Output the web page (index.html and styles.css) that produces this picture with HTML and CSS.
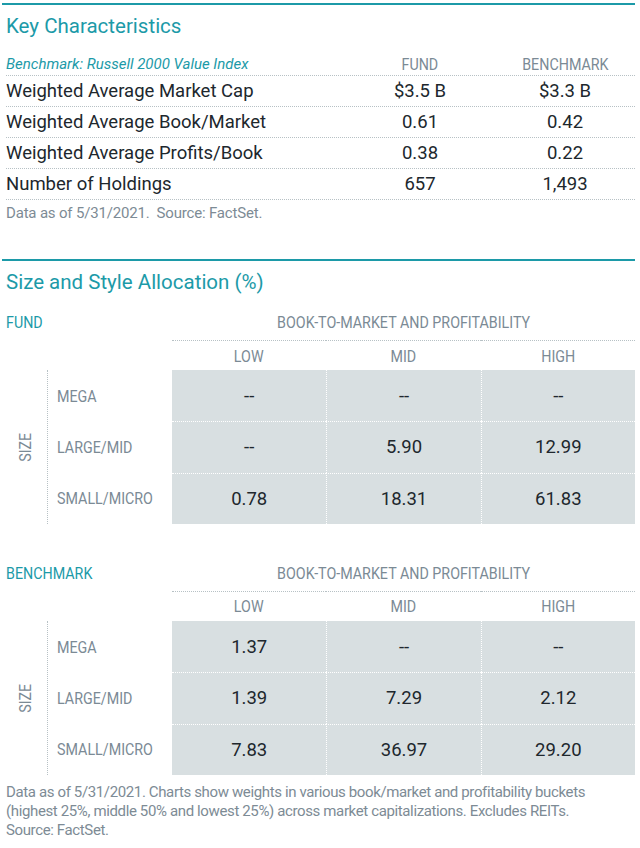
FILE: index.html
```html
<!DOCTYPE html>
<html>
<head>
<meta charset="utf-8">
<link rel="stylesheet" href="styles.css">
</head>
<body>
<section class="section">
  <h2 class="title">Key Characteristics</h2>
  <div class="kc">
    <div class="kc-row kc-head">
      <div class="bench-name">Benchmark: Russell 2000 Value Index</div>
      <div class="col-h"><span class="c">FUND</span></div>
      <div class="col-h"><span class="c">BENCHMARK</span></div>
    </div>
    <div class="kc-row"><div>Weighted Average Market Cap</div><div class="num">$3.5 B</div><div class="num">$3.3 B</div></div>
    <div class="kc-row"><div>Weighted Average Book/Market</div><div class="num">0.61</div><div class="num">0.42</div></div>
    <div class="kc-row"><div>Weighted Average Profits/Book</div><div class="num">0.38</div><div class="num">0.22</div></div>
    <div class="kc-row"><div>Number of Holdings</div><div class="num">657</div><div class="num">1,493</div></div>
  </div>
  <p class="note">Data as of 5/31/2021.&nbsp; Source: FactSet.</p>
</section>

<section class="section second">
  <h2 class="title">Size and Style Allocation (%)</h2>

  <div class="alloc">
    <div class="alloc-top">
      <div class="alloc-name"><span class="c cl">FUND</span></div>
      <div class="alloc-axis"><span class="c">BOOK-TO-MARKET AND PROFITABILITY</span></div>
    </div>
    <div class="alloc-grid">
      <div class="blank"></div><div class="blank"></div>
      <div class="colh"><span class="c">LOW</span></div><div class="colh"><span class="c">MID</span></div><div class="colh"><span class="c">HIGH</span></div>
      <div class="size"><span>SIZE</span></div>
      <div class="rowh"><span class="c cl">MEGA</span></div><div class="cell">--</div><div class="cell">--</div><div class="cell">--</div>
      <div class="rowh"><span class="c cl">LARGE/MID</span></div><div class="cell">--</div><div class="cell">5.90</div><div class="cell">12.99</div>
      <div class="rowh"><span class="c cl">SMALL/MICRO</span></div><div class="cell">0.78</div><div class="cell">18.31</div><div class="cell">61.83</div>
    </div>
  </div>

  <div class="alloc bench">
    <div class="alloc-top">
      <div class="alloc-name"><span class="c cl">BENCHMARK</span></div>
      <div class="alloc-axis"><span class="c">BOOK-TO-MARKET AND PROFITABILITY</span></div>
    </div>
    <div class="alloc-grid">
      <div class="blank"></div><div class="blank"></div>
      <div class="colh"><span class="c">LOW</span></div><div class="colh"><span class="c">MID</span></div><div class="colh"><span class="c">HIGH</span></div>
      <div class="size"><span>SIZE</span></div>
      <div class="rowh"><span class="c cl">MEGA</span></div><div class="cell">1.37</div><div class="cell">--</div><div class="cell">--</div>
      <div class="rowh"><span class="c cl">LARGE/MID</span></div><div class="cell">1.39</div><div class="cell">7.29</div><div class="cell">2.12</div>
      <div class="rowh"><span class="c cl">SMALL/MICRO</span></div><div class="cell">7.83</div><div class="cell">36.97</div><div class="cell">29.20</div>
    </div>
  </div>

  <p class="note foot">Data as of 5/31/2021. Charts show weights in various book/market and profitability buckets<br>(highest 25%, middle 50% and lowest 25%) across market capitalizations. Excludes REITs.<br>Source: FactSet.</p>
</section>
</body>
</html>
```

FILE: styles.css
```css
* { box-sizing: border-box; }
html, body { margin: 0; padding: 0; background: #fff; }
body {
  font-family: Roboto, "Noto Sans", sans-serif;
  color: #20272d;
  width: 640px;
  overflow-x: hidden;
}
.section {
  margin: 3px 5px 0 2px;
  border-top: 2px solid #1c9aa8;
  padding-left: 4px;
}
.second { margin-top: 36px; }
.title {
  margin: 0;
  font-weight: 400;
  font-size: 20.5px;
  line-height: 28px;
  padding-top: 7px;
  color: #1c9aa8;
}
.c {
  display: inline-block;
  font-size: 17px;
  transform: scaleX(0.84);
  white-space: nowrap;
}
.cl { transform-origin: left center; }
.kc { margin-top: 13px; }
.kc-row {
  display: grid;
  grid-template-columns: 1fr 150px 140px;
  align-items: center;
  height: 31px;
  font-size: 18.5px;
  border-bottom: 1px dotted #b7c1c5;
}
.kc-head { height: 23px; align-items: end; padding-bottom: 1px; line-height: 20px; }
.bench-name {
  font-style: italic;
  font-size: 15px;
  color: #1c9aa8;
}
.col-h {
  text-align: center;
  color: #7b8a95;
}
.num { text-align: center; }
.note {
  margin: 4px 0 0;
  font-size: 15px;
  color: #7d8b95;
  letter-spacing: -0.18px;
  line-height: 19px;
  white-space: nowrap;
}
.alloc { margin-top: 12px; }
.alloc.bench { margin-top: 35px; }
.alloc-top {
  display: grid;
  grid-template-columns: 166px 1fr;
  align-items: start;
  height: 32px;
  line-height: 28px;
}
.alloc-name { color: #1c9aa8; }
.alloc-axis {
  text-align: center;
  color: #7b8a95;
}
.alloc-grid {
  display: grid;
  grid-template-columns: 46px 124px repeat(3, 1fr);
  grid-template-rows: 30px repeat(3, 51.33px);
  margin-left: -4px;
}
.colh {
  border-top: 1px dotted #b7c1c5;
  display: flex;
  align-items: center;
  justify-content: center;
  color: #7b8a95;
}
.size {
  grid-row: 2 / span 3;
  grid-column: 1;
  border-right: 1px dotted #b7c1c5;
  display: flex;
  align-items: center;
  justify-content: center;
}
.size span {
  writing-mode: vertical-rl;
  transform: rotate(180deg) scaleY(0.84);
  color: #7b8a95;
  font-size: 17px;
}
.rowh {
  display: flex;
  align-items: center;
  padding-left: 9px;
  color: #7b8a95;
}
.cell {
  background: #d8dfe1;
  display: flex;
  align-items: center;
  justify-content: center;
  font-size: 18.5px;
  border-left: 1px dotted #fff;
  border-top: 1px dotted #fff;
}
.rowh + .cell { border-left: none; }
.size + .rowh + .cell, .size + .rowh + .cell + .cell, .size + .rowh + .cell + .cell + .cell { border-top: none; }
.foot { margin-top: 8px; letter-spacing: -0.37px; }
```
